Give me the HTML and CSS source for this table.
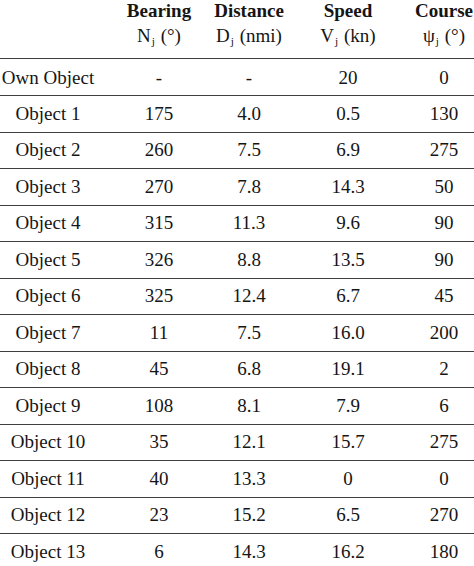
FILE: index.html
```html
<!DOCTYPE html>
<html lang="en">
<head>
<meta charset="utf-8">
<title>Objects table</title>
<link rel="stylesheet" href="styles.css">
</head>
<body>
<div class="table">
  <div class="row head">
    <div class="cell"></div>
    <div class="cell"><div class="h">Bearing</div><div class="s">N<sub>j</sub> (°)</div></div>
    <div class="cell"><div class="h">Distance</div><div class="s">D<sub>j</sub> (nmi)</div></div>
    <div class="cell"><div class="h">Speed</div><div class="s">V<sub>j</sub> (kn)</div></div>
    <div class="cell"><div class="h">Course</div><div class="s">ψ<sub>j</sub> (°)</div></div>
  </div>
  <div class="row first"><div class="cell">Own Object</div><div class="cell">-</div><div class="cell">-</div><div class="cell">20</div><div class="cell">0</div></div>
  <div class="row"><div class="cell">Object 1</div><div class="cell">175</div><div class="cell">4.0</div><div class="cell">0.5</div><div class="cell">130</div></div>
  <div class="row"><div class="cell">Object 2</div><div class="cell">260</div><div class="cell">7.5</div><div class="cell">6.9</div><div class="cell">275</div></div>
  <div class="row"><div class="cell">Object 3</div><div class="cell">270</div><div class="cell">7.8</div><div class="cell">14.3</div><div class="cell">50</div></div>
  <div class="row"><div class="cell">Object 4</div><div class="cell">315</div><div class="cell">11.3</div><div class="cell">9.6</div><div class="cell">90</div></div>
  <div class="row"><div class="cell">Object 5</div><div class="cell">326</div><div class="cell">8.8</div><div class="cell">13.5</div><div class="cell">90</div></div>
  <div class="row"><div class="cell">Object 6</div><div class="cell">325</div><div class="cell">12.4</div><div class="cell">6.7</div><div class="cell">45</div></div>
  <div class="row"><div class="cell">Object 7</div><div class="cell">11</div><div class="cell">7.5</div><div class="cell">16.0</div><div class="cell">200</div></div>
  <div class="row"><div class="cell">Object 8</div><div class="cell">45</div><div class="cell">6.8</div><div class="cell">19.1</div><div class="cell">2</div></div>
  <div class="row"><div class="cell">Object 9</div><div class="cell">108</div><div class="cell">8.1</div><div class="cell">7.9</div><div class="cell">6</div></div>
  <div class="row"><div class="cell">Object 10</div><div class="cell">35</div><div class="cell">12.1</div><div class="cell">15.7</div><div class="cell">275</div></div>
  <div class="row"><div class="cell">Object 11</div><div class="cell">40</div><div class="cell">13.3</div><div class="cell">0</div><div class="cell">0</div></div>
  <div class="row"><div class="cell">Object 12</div><div class="cell">23</div><div class="cell">15.2</div><div class="cell">6.5</div><div class="cell">270</div></div>
  <div class="row last"><div class="cell">Object 13</div><div class="cell">6</div><div class="cell">14.3</div><div class="cell">16.2</div><div class="cell">180</div></div>
</div>
</body>
</html>
```
FILE: styles.css
```css
html, body {
  margin: 0;
  padding: 0;
  overflow: hidden;
  background: #ffffff;
}
body {
  font-family: "Liberation Serif", "DejaVu Serif", "Times New Roman", serif;
  font-size: 19px;
  color: #151515;
}
.table {
  width: 508px;
  margin-left: -20px;
}
.row {
  display: grid;
  grid-template-columns: 136px 86px 94px 104px 88px;
  height: 35.5px;
  border-bottom: 1px solid #3f3f3f;
}
.row.head {
  height: 58px;
  align-items: start;
}
.row.first {
  height: 36px;
}
.row.first .cell {
  padding-top: 2px;
}
.row.last {
  border-bottom: none;
}
.cell {
  display: flex;
  flex-direction: column;
  align-items: center;
  justify-content: center;
  white-space: nowrap;
}
.head .cell {
  justify-content: flex-start;
}
.h {
  font-weight: bold;
  line-height: 22px;
}
.s {
  line-height: 24px;
  margin-top: 2px;
}
sub {
  font-size: 0.6em;
  vertical-align: -0.3em;
  line-height: 0;
  margin-left: 1px;
  margin-right: 1px;
}
```
